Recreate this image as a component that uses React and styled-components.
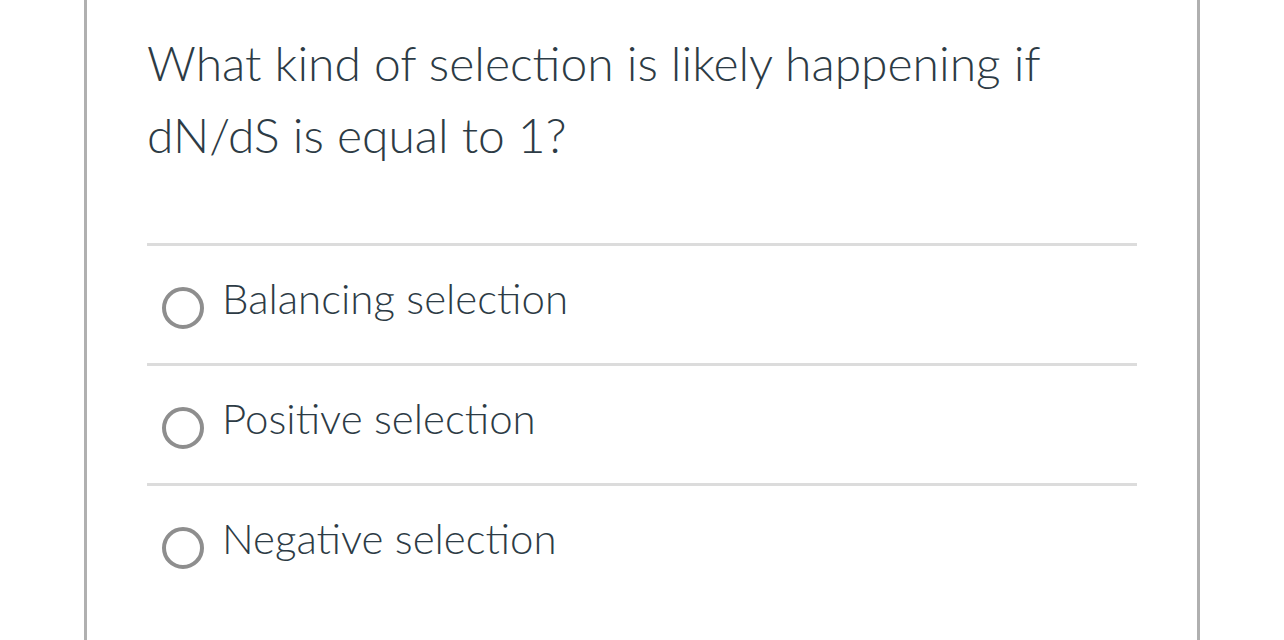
import React from "react";
import styled, { createGlobalStyle } from "styled-components";

const Global = createGlobalStyle`
  html, body { margin: 0; padding: 0; background: #ffffff; }
  body { font-family: Lato, "Noto Sans", sans-serif; color: #2d3b45; }
`;

const Page = styled.div`
  padding: 0 84px;
  height: 640px;
  overflow: hidden;
`;

const Card = styled.div`
  border-left: 3px solid #b0b0b0;
  border-right: 3px solid #b0b0b0;
  padding: 27px 60px 0 60px;
  height: 640px;
  box-sizing: border-box;
`;

const Question = styled.div`
  font-family: "Lato Light", Lato, sans-serif;
  font-size: 48px;
  font-weight: 300;
  line-height: 72px;
  margin: 0 0 72px 0;
`;

const Options = styled.div`
  display: flex;
  flex-direction: column;
`;

const Option = styled.label`
  display: flex;
  align-items: flex-start;
  gap: 18px;
  border-top: 3px solid #dcdcdc;
  padding: 21px 0 33px 15px;
  font-family: "Lato Light", Lato, sans-serif;
  font-size: 42px;
  font-weight: 300;
  line-height: 63px;
`;

const Radio = styled.span`
  width: 42px;
  height: 42px;
  margin-top: 20px;
  box-sizing: border-box;
  border: 4px solid #8e8e8e;
  border-radius: 50%;
  flex: none;
`;

const options = ["Balancing selection", "Positive selection", "Negative selection"];

export default function App() {
  return (
    <>
      <Global />
      <Page>
        <Card>
          <Question>What kind of selection is likely happening if dN/dS is equal to 1?</Question>
          <Options>
            {options.map((o) => (
              <Option key={o}>
                <Radio />
                <span>{o}</span>
              </Option>
            ))}
          </Options>
        </Card>
      </Page>
    </>
  );
}
